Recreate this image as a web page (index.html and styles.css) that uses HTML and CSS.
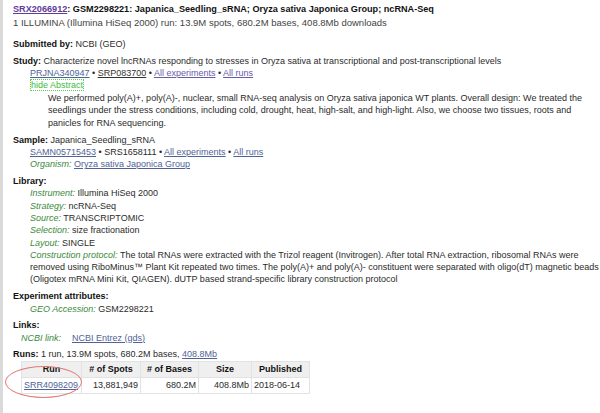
FILE: index.html
```html
<!DOCTYPE html>
<html>
<head>
<meta charset="utf-8">
<link rel="stylesheet" href="styles.css">
</head>
<body>
<div class="page">
  <div class="head">
    <div class="title"><a class="lnk visited">SRX2066912</a>: GSM2298221: Japanica_Seedling_sRNA; Oryza sativa Japonica Group; ncRNA-Seq</div>
    <div class="sub">1 ILLUMINA (Illumina HiSeq 2000) run: 13.9M spots, 680.2M bases, 408.8Mb downloads</div>
  </div>

  <div class="sec"><b>Submitted by:</b> NCBI (GEO)</div>

  <div class="sec">
    <div><b>Study:</b> Characterize novel lncRNAs responding to stresses in Oryza sativa at transcriptional and post-transcriptional levels</div>
    <div class="ind"><a class="lnk">PRJNA340947</a> • <a class="lnk dark">SRP083700</a> • <a class="lnk visited2">All experiments</a> • <a class="lnk visited2">All runs</a></div>
    <div class="ind"><span class="toggle">hide Abstract</span></div>
    <div class="abstract">We performed poly(A)+, poly(A)-, nuclear, small RNA-seq analysis on Oryza sativa japonica WT plants. Overall design: We treated the seedlings under the stress conditions, including cold, drought, heat, high-salt, and high-light. Also, we choose two tissues, roots and panicles for RNA sequencing.</div>
  </div>

  <div class="sec">
    <div><b>Sample:</b> Japanica_Seedling_sRNA</div>
    <div class="ind"><a class="lnk">SAMN05715453</a> • SRS1658111 • <a class="lnk">All experiments</a> • <a class="lnk">All runs</a></div>
    <div class="ind"><i class="lbl">Organism:</i> <a class="lnk">Oryza sativa Japonica Group</a></div>
  </div>

  <div class="sec">
    <div><b>Library:</b></div>
    <div class="ind"><i class="lbl">Instrument:</i> Illumina HiSeq 2000</div>
    <div class="ind"><i class="lbl">Strategy:</i> ncRNA-Seq</div>
    <div class="ind"><i class="lbl">Source:</i> TRANSCRIPTOMIC</div>
    <div class="ind"><i class="lbl">Selection:</i> size fractionation</div>
    <div class="ind"><i class="lbl">Layout:</i> SINGLE</div>
    <div class="ind"><i class="lbl">Construction protocol:</i> The total RNAs were extracted with the Trizol reagent (Invitrogen). After total RNA extraction, ribosomal RNAs were removed using RiboMinus™ Plant Kit repeated two times. The poly(A)+ and poly(A)- constituent were separated with oligo(dT) magnetic beads (Oligotex mRNA Mini Kit, QIAGEN). dUTP based strand-specific library construction protocol</div>
  </div>

  <div class="sec">
    <div><b>Experiment attributes:</b></div>
    <div class="ind"><i class="lbl">GEO Accession:</i> GSM2298221</div>
  </div>

  <div class="sec">
    <div><b>Links:</b></div>
    <div class="linkrow"><i class="lbl linklbl">NCBI link:</i> <a class="lnk">NCBI Entrez (gds)</a></div>
  </div>

  <div class="sec">
    <div><b>Runs:</b> 1 run, 13.9M spots, 680.2M bases, <a class="lnk">408.8Mb</a></div>
    <table class="runs">
      <thead>
        <tr><th class="c1">Run</th><th class="c2"># of Spots</th><th class="c3"># of Bases</th><th class="c4">Size</th><th class="c5">Published</th></tr>
      </thead>
      <tbody>
        <tr>
          <td class="runcell"><a class="lnk">SRR4098209</a><span class="circle"></span></td>
          <td class="num">13,881,949</td>
          <td class="num">680.2M</td>
          <td class="num">408.8Mb</td>
          <td>2018-06-14</td>
        </tr>
      </tbody>
    </table>
  </div>
</div>
</body>
</html>
```

FILE: styles.css
```css
html, body {
  margin: 0;
  padding: 0;
  background: #fff;
}

body {
  font-family: "Liberation Sans", Arial, sans-serif;
  font-size: 9px;
  color: #2b2b2b;
  line-height: 12.3px;
}

.page {
  border-left: 3px solid #dadada;
  min-height: 413px;
  box-sizing: border-box;
  padding: 3px 0 0 10px;
}

.head {
  margin-bottom: 9px;
}

.title {
  font-weight: bold;
  font-size: 9.15px;
  color: #111;
  line-height: 13px;
}

.sub {
  color: #444;
  font-size: 9.5px;
  line-height: 13px;
}

.sec {
  margin-top: 4.5px;
}

b {
  color: #111;
}

.lnk {
  color: #4f6397;
  text-decoration: underline;
}

.visited {
  color: #5f3d99;
}

.visited2 {
  color: #6a5aa8;
}

.dark {
  color: #333;
}

.ind {
  padding-left: 17px;
}

.abstract {
  padding-left: 35px;
  line-height: 12.5px;
}

.toggle {
  color: #3dbb3d;
  border: 1px dotted #5ccc5c;
  line-height: 10px;
  display: inline-block;
}

.lbl {
  color: #3b8a3b;
}

.linkrow {
  padding-left: 8px;
  display: flex;
}

.linklbl {
  width: 51px;
}

.runs {
  margin-left: 8px;
  border-collapse: collapse;
  border: 1px solid #e2e2e2;
  font-size: 9px;
}

.runs th,
.runs td {
  border: 1px solid #e2e2e2;
  padding: 0 2px;
  height: 15px;
  line-height: 13px;
  white-space: nowrap;
}

.runs th {
  background: #efefef;
  color: #111;
  font-weight: bold;
  text-align: center;
}

.c1 { width: 55px; }
.c2 { width: 54px; }
.c3 { width: 53px; }
.c4 { width: 48px; }
.c5 { width: 53px; }

.runs td.num {
  text-align: right;
}

.runcell {
  position: relative;
}

.circle {
  position: absolute;
  left: -17px;
  top: -12px;
  width: 77px;
  height: 32px;
  border: 1px solid #e27a7a;
  border-radius: 50%;
  box-sizing: border-box;
  pointer-events: none;
}
```
